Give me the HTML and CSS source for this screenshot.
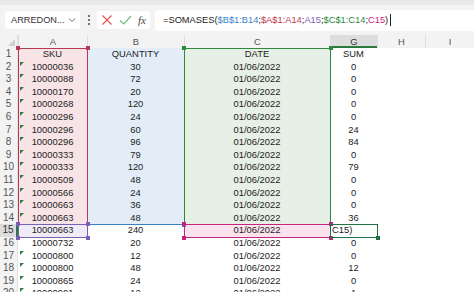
FILE: index.html
```html
<!DOCTYPE html>
<html lang="pt">
<head>
    <meta charset="UTF-8">
    <title>SOMASES</title>
    <link rel="stylesheet" href="styles.css">
</head>
<body>

<div class="ribbon-edge"></div>

<div class="formula-bar">
    <div class="name-box">
        <span>ARREDON...</span>
        <svg class="chevron" width="8" height="6" viewBox="0 0 8 6"><path d="M1 1.5 L4 4.5 L7 1.5" fill="none" stroke="#666" stroke-width="1"/></svg>
    </div>
    <div class="dots">
        <svg width="4" height="12" viewBox="0 0 4 12"><circle cx="2" cy="2" r="1.1" fill="#555"/><circle cx="2" cy="6" r="1.1" fill="#555"/><circle cx="2" cy="10" r="1.1" fill="#555"/></svg>
    </div>
    <div class="fx-box">
        <svg class="cancel" width="12" height="12" viewBox="0 0 12 12"><path d="M1.5 1.5 L10.5 10.5 M10.5 1.5 L1.5 10.5" stroke="#e0575b" stroke-width="1.2" fill="none"/></svg>
        <svg class="enter" width="13" height="12" viewBox="0 0 13 12"><path d="M1 6.5 L4.8 10 L12 2" stroke="#6cbf73" stroke-width="1.2" fill="none"/></svg>
        <span class="fx">fx</span>
    </div>
    <div class="formula">=SOMASES(<span class="f-blue">$B$1:B14</span>;<span class="f-red">$A$1:A14</span>;<span class="f-purple">A15</span>;<span class="f-green">$C$1:C14</span>;<span class="f-magenta">C15</span>)<span class="caret"></span></div>
</div>

<div class="sheet">
    <div class="row head">
        <div class="rh corner"><svg width="7" height="7" viewBox="0 0 7 7"><path d="M7 0 L7 7 L0 7 Z" fill="#cfcfcf"/></svg></div>
        <div class="c-a">A</div>
        <div class="c-b">B</div>
        <div class="c-c">C</div>
        <div class="c-g sel">G</div>
        <div class="c-h">H</div>
        <div class="c-i">I</div>
    </div>

    <div class="row"><div class="rh">1</div><div class="c-a pink">SKU</div><div class="c-b blue">QUANTITY</div><div class="c-c green">DATE</div><div class="c-g">SUM</div><div class="c-h"></div><div class="c-i"></div></div>
    <div class="row"><div class="rh">2</div><div class="c-a pink tri">10000036</div><div class="c-b blue">30</div><div class="c-c green">01/06/2022</div><div class="c-g">0</div><div class="c-h"></div><div class="c-i"></div></div>
    <div class="row"><div class="rh">3</div><div class="c-a pink tri">10000088</div><div class="c-b blue">72</div><div class="c-c green">01/06/2022</div><div class="c-g">0</div><div class="c-h"></div><div class="c-i"></div></div>
    <div class="row"><div class="rh">4</div><div class="c-a pink tri">10000170</div><div class="c-b blue">20</div><div class="c-c green">01/06/2022</div><div class="c-g">0</div><div class="c-h"></div><div class="c-i"></div></div>
    <div class="row"><div class="rh">5</div><div class="c-a pink tri">10000268</div><div class="c-b blue">120</div><div class="c-c green">01/06/2022</div><div class="c-g">0</div><div class="c-h"></div><div class="c-i"></div></div>
    <div class="row"><div class="rh">6</div><div class="c-a pink tri">10000296</div><div class="c-b blue">24</div><div class="c-c green">01/06/2022</div><div class="c-g">0</div><div class="c-h"></div><div class="c-i"></div></div>
    <div class="row"><div class="rh">7</div><div class="c-a pink tri">10000296</div><div class="c-b blue">60</div><div class="c-c green">01/06/2022</div><div class="c-g">24</div><div class="c-h"></div><div class="c-i"></div></div>
    <div class="row"><div class="rh">8</div><div class="c-a pink tri">10000296</div><div class="c-b blue">96</div><div class="c-c green">01/06/2022</div><div class="c-g">84</div><div class="c-h"></div><div class="c-i"></div></div>
    <div class="row"><div class="rh">9</div><div class="c-a pink tri">10000333</div><div class="c-b blue">79</div><div class="c-c green">01/06/2022</div><div class="c-g">0</div><div class="c-h"></div><div class="c-i"></div></div>
    <div class="row"><div class="rh">10</div><div class="c-a pink tri">10000333</div><div class="c-b blue">120</div><div class="c-c green">01/06/2022</div><div class="c-g">79</div><div class="c-h"></div><div class="c-i"></div></div>
    <div class="row"><div class="rh">11</div><div class="c-a pink tri">10000509</div><div class="c-b blue">48</div><div class="c-c green">01/06/2022</div><div class="c-g">0</div><div class="c-h"></div><div class="c-i"></div></div>
    <div class="row"><div class="rh">12</div><div class="c-a pink tri">10000566</div><div class="c-b blue">24</div><div class="c-c green">01/06/2022</div><div class="c-g">0</div><div class="c-h"></div><div class="c-i"></div></div>
    <div class="row"><div class="rh">13</div><div class="c-a pink tri">10000663</div><div class="c-b blue">36</div><div class="c-c green">01/06/2022</div><div class="c-g">0</div><div class="c-h"></div><div class="c-i"></div></div>
    <div class="row"><div class="rh">14</div><div class="c-a pink tri">10000663</div><div class="c-b blue">48</div><div class="c-c green">01/06/2022</div><div class="c-g">36</div><div class="c-h"></div><div class="c-i"></div></div>
    <div class="row"><div class="rh sel">15</div><div class="c-a lavender">10000663</div><div class="c-b">240</div><div class="c-c rose">01/06/2022</div><div class="c-g edit">C15)</div><div class="c-h"></div><div class="c-i"></div></div>
    <div class="row"><div class="rh">16</div><div class="c-a">10000732</div><div class="c-b">20</div><div class="c-c">01/06/2022</div><div class="c-g">0</div><div class="c-h"></div><div class="c-i"></div></div>
    <div class="row"><div class="rh">17</div><div class="c-a tri">10000800</div><div class="c-b">12</div><div class="c-c">01/06/2022</div><div class="c-g">0</div><div class="c-h"></div><div class="c-i"></div></div>
    <div class="row"><div class="rh">18</div><div class="c-a tri">10000800</div><div class="c-b">48</div><div class="c-c">01/06/2022</div><div class="c-g">12</div><div class="c-h"></div><div class="c-i"></div></div>
    <div class="row"><div class="rh">19</div><div class="c-a tri">10000865</div><div class="c-b">24</div><div class="c-c">01/06/2022</div><div class="c-g">0</div><div class="c-h"></div><div class="c-i"></div></div>
    <div class="row"><div class="rh">20</div><div class="c-a tri">10000901</div><div class="c-b">12</div><div class="c-c">01/06/2022</div><div class="c-g">1</div><div class="c-h"></div><div class="c-i"></div></div>

    <!-- formula reference boxes drawn over the cells -->
    <div class="range range-b"></div>
    <div class="range range-a"><i class="mark tl"></i><i class="mark tr"></i></div>
    <div class="range range-c"><i class="mark tl"></i><i class="mark tr"></i><i class="mark bl blue-mark"></i></div>
    <div class="range range-a15"><i class="mark tl"></i><i class="mark tr"></i><i class="mark bl"></i><i class="mark br"></i></div>
    <div class="range range-c15"><i class="mark tl"></i><i class="mark tr"></i><i class="mark bl"></i><i class="mark br"></i></div>
    <div class="active-cell"><i class="handle"></i></div>
</div>

</body>
</html>
```

FILE: styles.css
```css
body {
    margin: 0;
    padding: 0;
    width: 474px;
    height: 292px;
    overflow: hidden;
    background-color: #fff;
    font-family: "Liberation Sans", Arial, sans-serif;
}
.ribbon-edge {
    height: 5px;
    background-color: #e8e8e8;
}
.formula-bar {
    display: flex;
    align-items: center;
    height: 30px;
    padding-left: 5px;
    background-color: #f3f3f3;
}
.name-box {
    display: flex;
    align-items: center;
    justify-content: space-between;
    box-sizing: border-box;
    width: 75px;
    height: 18px;
    padding: 0 4px 0 6px;
    background-color: #fff;
    border-radius: 3px;
    font-size: 9.2px;
    color: #333;
}
.dots {
    display: flex;
    width: 17px;
    justify-content: center;
}
.fx-box {
    display: flex;
    align-items: center;
    box-sizing: border-box;
    width: 53px;
    height: 18px;
    padding-left: 4px;
    background-color: #fff;
    border-radius: 3px;
}
.fx-box .enter {
    margin-left: 6px;
}
.fx {
    margin-left: 6px;
    font-family: "Liberation Serif", serif;
    font-style: italic;
    font-size: 11px;
    color: #444;
}
.formula {
    display: flex;
    align-items: center;
    flex: 1;
    height: 21px;
    margin-left: 5px;
    padding-left: 8px;
    background-color: #fff;
    border-radius: 3px 0 0 3px;
    font-size: 9.3px;
    color: #222;
    white-space: nowrap;
}
.f-blue { color: #3b7fc4; }
.f-red { color: #c0394e; }
.f-purple { color: #7b5fb4; }
.f-green { color: #2c8a3c; }
.f-magenta { color: #c2267d; }
.caret {
    display: inline-block;
    width: 1px;
    height: 12px;
    margin-left: 2px;
    background-color: #222;
}

.sheet {
    position: relative;
}
.row {
    display: flex;
    height: 12.6px;
    font-size: 9.4px;
    line-height: 12.6px;
    color: #222;
}
.row.head {
    height: 13px;
    line-height: 13px;
    background-color: #f3f3f3;
    color: #555;
    font-size: 9.4px;
}
.row > div {
    flex: none;
    text-align: center;
    box-sizing: border-box;
    position: relative;
}
.rh {
    width: 18px;
    background-color: #f3f3f3;
    color: #555;
    font-size: 10px;
    border-right: 1px solid #e2e2e2;
}
.rh.sel {
    background-color: #dcdcdc;
    color: #333;
    border-right: 2px solid #2a7a3f;
}
.corner {
    display: flex;
    align-items: flex-end;
    justify-content: flex-end;
    padding: 0 2px 2px 0;
}
.c-a { width: 69px; }
.c-b { width: 97px; }
.c-c { width: 146px; }
.c-g { width: 47px; }
.c-h { width: 48px; }
.c-i { width: 49px; }
.head > div + div {
    border-left: 1px solid #dedede;
}
.head .sel {
    background-color: #dddddd;
    color: #333;
    border-bottom: 2px solid #2a7a3f;
}

.pink { background-color: #f8e4e6; }
.blue { background-color: #e3edf8; }
.green { background-color: #e7f0e6; }
.lavender { background-color: #efebf7; }
.rose { background-color: #fbe3ee; }

.tri::before {
    content: "";
    position: absolute;
    left: 2px;
    top: 1px;
    border-top: 4px solid #2f7d3a;
    border-right: 4px solid transparent;
}
.edit {
    text-align: left !important;
    padding-left: 2px;
}

.range {
    position: absolute;
    box-sizing: border-box;
    border: 1.5px solid;
}
.range-b {
    left: 87px;
    top: 13px;
    width: 98px;
    height: 177px;
    border-color: #3b7fc4;
    border-top-color: transparent;
}
.range-a {
    left: 17.5px;
    top: 13px;
    width: 70px;
    height: 177px;
    border-color: #b73a52;
}
.range-c {
    left: 184px;
    top: 13px;
    width: 147px;
    height: 177px;
    border-color: #2c8a3c;
}
.range-a15 {
    left: 17.5px;
    top: 189px;
    width: 70px;
    height: 14px;
    border-color: #7b5fb4;
}
.range-c15 {
    left: 184px;
    top: 189px;
    width: 147px;
    height: 14px;
    border-color: #c2267d;
}
.mark {
    position: absolute;
    width: 4px;
    height: 4px;
}
.range-a .mark { background-color: #b73a52; }
.range-c .mark { background-color: #2c8a3c; }
.range-c .blue-mark { background-color: #3b7fc4; }
.range-a15 .mark { background-color: #7b5fb4; }
.range-c15 .mark { background-color: #c2267d; }
.tl { left: -3px; top: -3px; }
.tr { right: -3px; top: -3px; }
.bl { left: -3px; bottom: -3px; }
.br { right: -3px; bottom: -3px; }

.active-cell {
    position: absolute;
    left: 330px;
    top: 189px;
    width: 48px;
    height: 14px;
    box-sizing: border-box;
    border: 1.5px solid #1f7244;
}
.handle {
    position: absolute;
    right: -3px;
    bottom: -3px;
    width: 4px;
    height: 4px;
    background-color: #1f7244;
}
```
